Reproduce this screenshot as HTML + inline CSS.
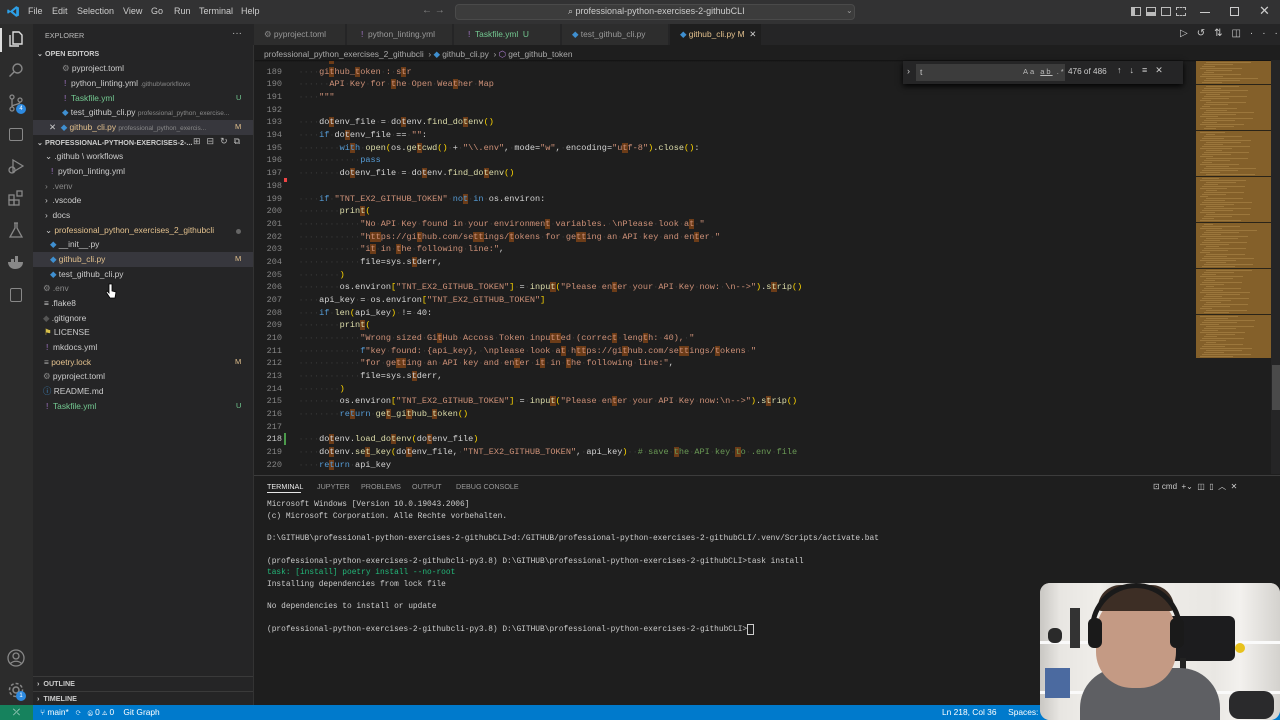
<!DOCTYPE html>
<html><head><meta charset="utf-8">
<style>
*{margin:0;padding:0;box-sizing:border-box}
body{width:1280px;height:720px;overflow:hidden;background:#1e1e1e;font-family:"Liberation Sans",sans-serif;color:#ccc;position:relative}
.a{position:absolute;white-space:nowrap}
#title{left:0;top:0;width:1280px;height:24px;background:#323233}
#act{left:0;top:24px;width:33px;height:681px;background:#2c2c2c}
#side{left:33px;top:24px;width:220px;height:681px;background:#252526}
.r{font-size:8.4px;color:#ccc;height:14.6px;line-height:14.6px}
.hd{font-size:7.2px;font-weight:bold;color:#ccc}
#tabs{left:253px;top:24px;width:1027px;height:21px;background:#252526}
.tab{top:24px;height:21px;line-height:21px;font-size:8.4px;color:#999;background:#2d2d2d;border-right:1px solid #252526}
.mono{font-family:"Liberation Mono",monospace}
#code .ln{position:absolute;width:1000px;font-size:8.55px;height:12.68px;line-height:12.68px}
.num{position:absolute;font-family:"Liberation Mono",monospace;font-size:8.55px;color:#858585;width:30px;text-align:right}
.d{color:#3a3a3a}
.h{background:rgba(160,80,20,.6)}
.s{color:#ce9178}.k{color:#569cd6}.f{color:#dcdcaa}.c{color:#6a9955}.b{color:#ffd700}.v{color:#d4d4d4}
.t{font-family:"Liberation Mono",monospace;font-size:7.85px;color:#ccc;height:11.4px;line-height:11.4px}
</style></head><body>
<div id="title" class="a"></div>
<svg class="a" style="left:7px;top:5px" width="13" height="13" viewBox="0 0 24 24"><path d="M17 2l5 2.5v15L17 22 6 13l-4 3-1.5-1V9L2 8l4 3 11-9zM17 7l-6 5 6 5z" fill="#2d9fe6"/></svg>
<div class="a" style="left:28px;top:6px;font-size:9px">File</div>
<div class="a" style="left:52px;top:6px;font-size:9px">Edit</div>
<div class="a" style="left:77px;top:6px;font-size:9px">Selection</div>
<div class="a" style="left:123px;top:6px;font-size:9px">View</div>
<div class="a" style="left:151px;top:6px;font-size:9px">Go</div>
<div class="a" style="left:174px;top:6px;font-size:9px">Run</div>
<div class="a" style="left:199px;top:6px;font-size:9px">Terminal</div>
<div class="a" style="left:241px;top:6px;font-size:9px">Help</div>
<div class="a" style="left:422px;top:5px;font-size:10px;color:#888">← →</div>
<div class="a" style="left:455px;top:4px;width:400px;height:16px;background:#3c3c3c;border:1px solid #4a4a4a;border-radius:4px"></div>
<div class="a" style="left:568px;top:6px;font-size:9px;color:#ccc">⌕ professional-python-exercises-2-githubCLI</div>
<div class="a" style="left:846px;top:6px;font-size:8px;color:#999">⌄</div>
<div class="a" style="left:1131px;top:7px;width:10px;height:9px;border:1.3px solid #bbb;border-left-width:4px"></div>
<div class="a" style="left:1146px;top:7px;width:10px;height:9px;border:1.3px solid #bbb;border-bottom-width:4px"></div>
<div class="a" style="left:1161px;top:7px;width:10px;height:9px;border:1.3px solid #bbb"></div>
<div class="a" style="left:1176px;top:7px;width:10px;height:9px;border:1.3px dashed #bbb"></div>
<div class="a" style="left:1200px;top:12px;width:10px;height:1px;background:#ccc"></div>
<div class="a" style="left:1230px;top:7px;width:9px;height:9px;border:1.2px solid #ccc"></div>
<div class="a" style="left:1259px;top:3px;font-size:13px;color:#ccc">✕</div>

<div id="act" class="a"></div>
<div class="a" style="left:0;top:28px;width:2px;height:24px;background:#ddd"></div>
<svg class="a" style="left:7px;top:30px" width="18" height="18" viewBox="0 0 18 18" fill="none" stroke="#ddd" stroke-width="1.4"><path d="M6 2h6l3 3v9H6zM3 5v11h9"/></svg>
<svg class="a" style="left:8px;top:62px" width="16" height="16" viewBox="0 0 16 16" fill="none" stroke="#888" stroke-width="1.4"><circle cx="9.5" cy="6.5" r="4.5"/><path d="M6 10l-4.5 4.5"/></svg>
<svg class="a" style="left:8px;top:94px" width="16" height="18" viewBox="0 0 16 18" fill="none" stroke="#888" stroke-width="1.3"><circle cx="4" cy="3" r="2"/><circle cx="4" cy="15" r="2"/><circle cx="12" cy="6" r="2"/><path d="M4 5v8M12 8c0 3-8 2-8 5"/></svg>
<div class="a" style="left:16px;top:104px;width:10px;height:10px;border-radius:5px;background:#2d8ae0;font-size:6px;color:#fff;text-align:center;line-height:10px">4</div>
<div class="a" style="left:9px;top:128px;width:14px;height:13px;border:1.3px solid #888;border-radius:2px"></div>
<svg class="a" style="left:8px;top:158px" width="16" height="16" viewBox="0 0 16 16" fill="none" stroke="#888" stroke-width="1.3"><path d="M5 2l10 6-10 6z"/><circle cx="4" cy="12" r="3"/></svg>
<svg class="a" style="left:8px;top:190px" width="16" height="16" viewBox="0 0 16 16" fill="none" stroke="#888" stroke-width="1.3"><rect x="1" y="5" width="5" height="5"/><rect x="1" y="10" width="5" height="5"/><rect x="6" y="10" width="5" height="5"/><rect x="9" y="1" width="5" height="5"/></svg>
<svg class="a" style="left:8px;top:222px" width="16" height="16" viewBox="0 0 16 16" fill="none" stroke="#888" stroke-width="1.3"><path d="M6 1h4M7 1v5l-5 9h12l-5-9V1"/></svg>
<svg class="a" style="left:7px;top:256px" width="18" height="14" viewBox="0 0 18 14" fill="#888"><path d="M1 6h15c0 5-4 7-8 7S1 10 1 6zM4 3h3v3H4zM8 3h3v3H8zM8 0h3v3H8z"/></svg>
<div class="a" style="left:10px;top:288px;width:12px;height:14px;border:1.3px solid #888;border-radius:2px"></div>
<svg class="a" style="left:7px;top:649px" width="18" height="18" viewBox="0 0 18 18" fill="none" stroke="#888" stroke-width="1.3"><circle cx="9" cy="9" r="8"/><circle cx="9" cy="7" r="3"/><path d="M3.5 14.5c3-3 8-3 11 0"/></svg>
<svg class="a" style="left:7px;top:681px" width="18" height="18" viewBox="0 0 18 18" fill="none" stroke="#888" stroke-width="1.5"><circle cx="9" cy="9" r="3"/><circle cx="9" cy="9" r="6.5" stroke-dasharray="3 2"/></svg>
<div class="a" style="left:16px;top:691px;width:10px;height:10px;border-radius:5px;background:#2d8ae0;font-size:6px;color:#fff;text-align:center;line-height:10px">1</div>

<div id="side" class="a"></div>
<div class="a hd" style="left:45px;top:31px;font-weight:normal;color:#bbb">EXPLORER</div>
<div class="a" style="left:232px;top:28px;font-size:10px;color:#bbb">···</div>
<div class="a hd" style="left:37px;top:49px">⌄ OPEN EDITORS</div>
<div class="a r" style="left:62px;top:61px"><span style="color:#888">⚙</span> pyproject.toml</div>
<div class="a r" style="left:64px;top:76px"><span style="color:#a074c4">!</span> &nbsp;python_linting.yml <span style="font-size:6.5px;color:#888">.github\workflows</span></div>
<div class="a r" style="left:64px;top:91px;color:#73c991"><span style="color:#a074c4">!</span> &nbsp;Taskfile.yml</div>
<div class="a r" style="left:236px;top:91px;color:#73c991;font-size:7.5px">U</div>
<div class="a r" style="left:62px;top:105px"><span style="color:#3f8fd0">◆</span> test_github_cli.py <span style="font-size:6.5px;color:#888">professional_python_exercise...</span></div>
<div class="a" style="left:33px;top:120px;width:220px;height:14.6px;background:#37373d"></div>
<div class="a r" style="left:49px;top:120px;color:#e2c08d"><span style="color:#ccc">✕</span> &nbsp;<span style="color:#3f8fd0">◆</span> github_cli.py <span style="font-size:6.5px;color:#888">professional_python_exercis...</span></div>
<div class="a r" style="left:235px;top:120px;color:#e2c08d;font-size:7.5px">M</div>
<div class="a hd" style="left:37px;top:138px">⌄ PROFESSIONAL-PYTHON-EXERCISES-2-...</div>
<div class="a" style="left:193px;top:136px;font-size:9px;color:#bbb;letter-spacing:6px">⊞⊟↻⧉</div>
<div class="a r" style="left:45px;top:149px">⌄ .github \ workflows</div>
<div class="a r" style="left:51px;top:164px"><span style="color:#a074c4">!</span> &nbsp;python_linting.yml</div>
<div class="a r" style="left:45px;top:179px;color:#888">› &nbsp;.venv</div>
<div class="a r" style="left:45px;top:193px">› &nbsp;.vscode</div>
<div class="a r" style="left:45px;top:208px">› &nbsp;docs</div>
<div class="a r" style="left:45px;top:223px;color:#e2c08d"><span style="color:#ccc">⌄</span> professional_python_exercises_2_githubcli</div>
<div class="a" style="left:236px;top:229px;width:5px;height:5px;border-radius:3px;background:#666"></div>
<div class="a r" style="left:50px;top:237px"><span style="color:#3f8fd0">◆</span> __init__.py</div>
<div class="a" style="left:33px;top:252px;width:220px;height:14.6px;background:#37373d"></div>
<div class="a r" style="left:50px;top:252px;color:#e2c08d"><span style="color:#3f8fd0">◆</span> github_cli.py</div>
<div class="a r" style="left:235px;top:252px;color:#e2c08d;font-size:7.5px">M</div>
<div class="a r" style="left:50px;top:267px"><span style="color:#3f8fd0">◆</span> test_github_cli.py</div>
<div class="a r" style="left:43px;top:281px;color:#888">⚙ .env</div>
<div class="a r" style="left:44px;top:296px">≡ .flake8</div>
<div class="a r" style="left:43px;top:311px"><span style="color:#555">◆</span> .gitignore</div>
<div class="a r" style="left:44px;top:325px"><span style="color:#d8c04a">⚑</span> LICENSE</div>
<div class="a r" style="left:46px;top:340px"><span style="color:#a074c4">!</span> &nbsp;mkdocs.yml</div>
<div class="a r" style="left:44px;top:355px;color:#e2c08d"><span style="color:#aaa">≡</span> poetry.lock</div>
<div class="a r" style="left:235px;top:355px;color:#e2c08d;font-size:7.5px">M</div>
<div class="a r" style="left:43px;top:369px"><span style="color:#888">⚙</span> pyproject.toml</div>
<div class="a r" style="left:43px;top:384px"><span style="color:#3f8fd0">ⓘ</span> README.md</div>
<div class="a r" style="left:46px;top:399px;color:#73c991"><span style="color:#a074c4">!</span> &nbsp;Taskfile.yml</div>
<div class="a r" style="left:236px;top:399px;color:#73c991;font-size:7.5px">U</div>
<svg class="a" style="left:105px;top:283px" width="12" height="16" viewBox="0 0 12 16"><path d="M4 1v9l-2-2-1 1 4 6h5l1-6-4-1V1z" fill="#fff" stroke="#000" stroke-width=".8"/></svg>
<div class="a" style="left:33px;top:676px;width:220px;height:1px;background:#3a3a3a"></div>
<div class="a hd" style="left:37px;top:679px">› &nbsp;OUTLINE</div>
<div class="a" style="left:33px;top:691px;width:220px;height:1px;background:#3a3a3a"></div>
<div class="a hd" style="left:37px;top:694px">› &nbsp;TIMELINE</div>
<div class="a" style="left:253px;top:24px;width:1px;height:681px;background:#333"></div>

<div id="tabs" class="a"></div>
<div class="a tab" style="left:254px;width:92px;padding-left:10px"><span style="color:#888">⚙</span> pyproject.toml</div>
<div class="a tab" style="left:347px;width:106px;padding-left:14px"><span style="color:#a074c4">!</span> &nbsp;python_linting.yml</div>
<div class="a tab" style="left:454px;width:107px;padding-left:14px;color:#73c991"><span style="color:#a074c4">!</span> &nbsp;Taskfile.yml &nbsp;U</div>
<div class="a tab" style="left:562px;width:107px;padding-left:10px"><span style="color:#3f8fd0">◆</span> test_github_cli.py</div>
<div class="a tab" style="left:670px;width:92px;padding-left:10px;background:#1e1e1e;color:#e2c08d"><span style="color:#3f8fd0">◆</span> github_cli.py M &nbsp;<span style="color:#ccc">✕</span></div>
<div class="a" style="left:1180px;top:28px;font-size:10px;color:#ccc;letter-spacing:9px">▷↺⇅◫···</div>
<div class="a" style="left:264px;top:49px;font-size:8.4px;color:#aaa">professional_python_exercises_2_githubcli &nbsp;› <span style="color:#3f8fd0">◆</span> github_cli.py &nbsp;› <span style="color:#b180d7">⬡</span> get_github_token</div>
<div class="a" style="left:255px;top:60px;width:1025px;height:2px;background:linear-gradient(#111,#1e1e1e)"></div>

<div id="code" class="a" style="left:0;top:0;width:1196px;height:474px;overflow:hidden"></div>
<div class="a" style="left:284px;top:178px;width:3px;height:4px;background:#e44"></div>
<div class="a" style="left:284px;top:433px;width:2px;height:12px;background:#4b9a4b"></div>
<div class="a" style="left:1196px;top:61px;width:75px;height:297px;background:#84602a"></div>
<div id="mm" class="a" style="left:1196px;top:61px;width:75px;height:297px"></div>
<div class="a" style="left:1271px;top:60px;width:9px;height:414px;background:#252526"></div>
<div class="a" style="left:1272px;top:365px;width:8px;height:45px;background:#4a4a4a"></div>

<div class="a" style="left:903px;top:61px;width:280px;height:23px;background:#252526;box-shadow:0 2px 6px #000"></div>
<div class="a" style="left:907px;top:66px;font-size:9px;color:#ccc">›</div>
<div class="a" style="left:916px;top:64px;width:149px;height:17px;background:#3c3c3c"></div>
<div class="a" style="left:920px;top:67px;font-size:8.5px;color:#ccc">t</div>
<div class="a" style="left:1023px;top:67px;font-size:7.5px;color:#bbb;letter-spacing:2px">Aa <u>ab</u> .*</div>
<div class="a" style="left:1068px;top:67px;font-size:8.2px;color:#ccc">476 of 486</div>
<div class="a" style="left:1117px;top:65px;font-size:9px;color:#ccc;letter-spacing:8px">↑↓≡✕</div>

<div class="a" style="left:254px;top:475px;width:1026px;height:1px;background:#3c3c3c"></div>
<div class="a" style="left:267px;top:482px;font-size:7.2px;color:#e7e7e7">TERMINAL</div>
<div class="a" style="left:267px;top:492px;width:34px;height:1px;background:#e7e7e7"></div>
<div class="a" style="left:317px;top:482px;font-size:7.2px;color:#999">JUPYTER</div>
<div class="a" style="left:361px;top:482px;font-size:7.2px;color:#999">PROBLEMS</div>
<div class="a" style="left:412px;top:482px;font-size:7.2px;color:#999">OUTPUT</div>
<div class="a" style="left:456px;top:482px;font-size:7.2px;color:#999">DEBUG CONSOLE</div>
<div class="a" style="left:1153px;top:481px;font-size:8px;color:#ccc">⊡ cmd &nbsp;+⌄ &nbsp;◫ &nbsp;▯ &nbsp;︿ &nbsp;✕</div>
<div class="a t" style="left:267px;top:499px">Microsoft Windows [Version 10.0.19043.2006]</div>
<div class="a t" style="left:267px;top:511px">(c) Microsoft Corporation. Alle Rechte vorbehalten.</div>
<div class="a t" style="left:267px;top:533px">D:\GITHUB\professional-python-exercises-2-githubCLI&gt;d:/GITHUB/professional-python-exercises-2-githubCLI/.venv/Scripts/activate.bat</div>
<div class="a t" style="left:267px;top:556px">(professional-python-exercises-2-githubcli-py3.8) D:\GITHUB\professional-python-exercises-2-githubCLI&gt;task install</div>
<div class="a t" style="left:267px;top:567px;color:#23b87a">task: [install] poetry install --no-root</div>
<div class="a t" style="left:267px;top:579px">Installing dependencies from lock file</div>
<div class="a t" style="left:267px;top:601px">No dependencies to install or update</div>
<div class="a t" style="left:267px;top:624px">(professional-python-exercises-2-githubcli-py3.8) D:\GITHUB\professional-python-exercises-2-githubCLI&gt;<span style="border:1px solid #ccc">&nbsp;</span></div>

<div class="a" style="left:0;top:705px;width:1280px;height:15px;background:#007acc"></div>
<div class="a" style="left:0;top:705px;width:33px;height:15px;background:#16825d;color:#fff;font-size:9px;text-align:center;line-height:15px">⤫</div>
<div class="a" style="left:40px;top:707px;font-size:8.4px;color:#fff">⑂ main* &nbsp;&nbsp;⟳ &nbsp;&nbsp;ⓧ 0 ⚠ 0 &nbsp;&nbsp;&nbsp;Git Graph</div>
<div class="a" style="left:942px;top:707px;font-size:8.4px;color:#fff">Ln 218, Col 36 &nbsp;&nbsp;&nbsp;&nbsp;Spaces: 4</div>

<div class="a" style="left:1040px;top:583px;width:240px;height:137px;border-radius:10px;overflow:hidden;background:#dcdad6">
 <div class="a" style="left:0;top:0;width:240px;height:137px;background:linear-gradient(90deg,#c9c7c3 0,#e8e6e2 20px,#f0eeea 60px,#d7d5d1 90px,#eeece8 120px,#e9e7e3 175px,#f3f1ee 200px,#d4d2ce 240px)"></div>
 <div class="a" style="left:0;top:58px;width:240px;height:3px;background:#fafafa"></div>
 <div class="a" style="left:0;top:108px;width:240px;height:3px;background:#fafafa"></div>
 <div class="a" style="left:30px;top:25px;width:10px;height:40px;background:#333"></div>
 <div class="a" style="left:8px;top:45px;width:14px;height:15px;border-radius:6px;background:#2a2a2a"></div>
 <div class="a" style="left:5px;top:85px;width:25px;height:30px;background:#4b6aa0"></div>
 <div class="a" style="left:125px;top:33px;width:70px;height:45px;border-radius:6px;background:#1c1c1e"></div>
 <div class="a" style="left:140px;top:75px;width:6px;height:40px;background:#222"></div>
 <div class="a" style="left:40px;top:85px;width:140px;height:60px;border-radius:40px 40px 0 0;background:#5e5f63"></div>
 <div class="a" style="left:56px;top:10px;width:80px;height:95px;border-radius:40px 40px 36px 36px;background:#c49a84"></div>
 <div class="a" style="left:58px;top:2px;width:76px;height:26px;border-radius:38px 38px 6px 6px;background:#3d2e25"></div>
 <div class="a" style="left:50px;top:0;width:92px;height:60px;border-radius:46px 46px 0 0;border:5px solid #1a1a1a;border-bottom:none"></div>
 <div class="a" style="left:48px;top:35px;width:14px;height:30px;border-radius:6px;background:#1a1a1a"></div>
 <div class="a" style="left:130px;top:35px;width:14px;height:30px;border-radius:6px;background:#1a1a1a"></div>
 <div class="a" style="left:189px;top:108px;width:45px;height:28px;border-radius:10px;background:#2a2a2c"></div>
 <div class="a" style="left:195px;top:60px;width:10px;height:10px;border-radius:5px;background:#e8c21d"></div>
</div>

<script>
var L=[
[188,'    Returns:'],
[189,'    github_token : str',1],
[190,'      API Key for the Open Weather Map',1],
[191,'    """',1],
[192,''],
[193,'    dotenv_file = dotenv.find_dotenv()'],
[194,'    if dotenv_file == "":'],
[195,'        with open(os.getcwd() + "\\\\.env", mode="w", encoding="utf-8").close():'],
[196,'            pass'],
[197,'        dotenv_file = dotenv.find_dotenv()'],
[198,''],
[199,'    if "TNT_EX2_GITHUB_TOKEN" not in os.environ:'],
[200,'        print('],
[201,'            "No API Key found in your environment variables. \\nPlease look at "'],
[202,'            "https://github.com/settings/tokens for getting an API key and enter "'],
[203,'            "it in the following line:",'],
[204,'            file=sys.stderr,'],
[205,'        )'],
[206,'        os.environ["TNT_EX2_GITHUB_TOKEN"] = input("Please enter your API Key now: \\n-->").strip()'],
[207,'    api_key = os.environ["TNT_EX2_GITHUB_TOKEN"]'],
[208,'    if len(api_key) != 40:'],
[209,'        print('],
[210,'            "Wrong sized GitHub Accoss Token inputted (correct length: 40), "'],
[211,'            f"key found: {api_key}, \\nplease look at https://github.com/settings/tokens "'],
[212,'            "for getting an API key and enter it in the following line:",'],
[213,'            file=sys.stderr,'],
[214,'        )'],
[215,'        os.environ["TNT_EX2_GITHUB_TOKEN"] = input("Please enter your API Key now:\\n-->").strip()'],
[216,'        return get_github_token()'],
[217,''],
[218,'    dotenv.load_dotenv(dotenv_file)'],
[219,'    dotenv.set_key(dotenv_file, "TNT_EX2_GITHUB_TOKEN", api_key)  # save the API key to .env file'],
[220,'    return api_key']];
var KW={'if':1,'with':1,'not':1,'in':1,'return':1,'pass':1};
var out='';
L.forEach(function(e,i){
 var n=e[0],s=e[1],cls=[],top=65.7+(n-189)*12.68;
 for(var j=0;j<s.length;j++)cls[j]=e[2]?'s':'v';
 if(!e[2]){
  var m,re=/(f?"[^"]*")|(#.*$)|([A-Za-z_]\w*)(?=\()|\b([A-Za-z_]\w*)\b|([()\[\]{}])/g;
  while(m=re.exec(s)){var c=null;
   if(m[1])c='s';else if(m[2])c='c';else if(m[3])c=KW[m[3]]?'k':'f';else if(m[4])c=KW[m[4]]?'k':null;else if(m[5])c='b';
   if(c)for(var j=m.index;j<m.index+m[0].length;j++)cls[j]=c;
   if(m[1]&&m[1][0]=='f')cls[m.index]='k';
  }
 }
 var h='';
 for(var j=0;j<s.length;j++){var ch=s[j];
  var t=ch==' '?'<span class="d">·</span>':ch=='t'?'<span class="h">t</span>':ch.replace('&','&amp;').replace('<','&lt;').replace('>','&gt;');
  h+='<span class="'+cls[j]+'">'+t+'</span>';}
 out+='<div class="num" style="left:252px;top:'+top+'px;line-height:12.68px;'+(n==218?'color:#c6c6c6':'')+'">'+n+'</div>';
 out+='<div class="ln mono" style="left:298.5px;top:'+top+'px">'+h+'</div>';
});
var code=document.getElementById('code');code.innerHTML=out;
code.style.clipPath='inset(61px 0 0 0)';
var mm='';for(var y=1;y<297;y+=2){var w=8+((y*37)%45);mm+='<div style="position:absolute;left:'+(3+(y*7)%8)+'px;top:'+y+'px;width:'+w+'px;height:1px;background:#c9a45e;opacity:.35"></div>';if(y%23==0)mm+='<div style="position:absolute;left:0;top:'+y+'px;width:75px;height:1px;background:#2a2418"></div>';}
document.getElementById('mm').innerHTML=mm;
</script>
</body></html>
